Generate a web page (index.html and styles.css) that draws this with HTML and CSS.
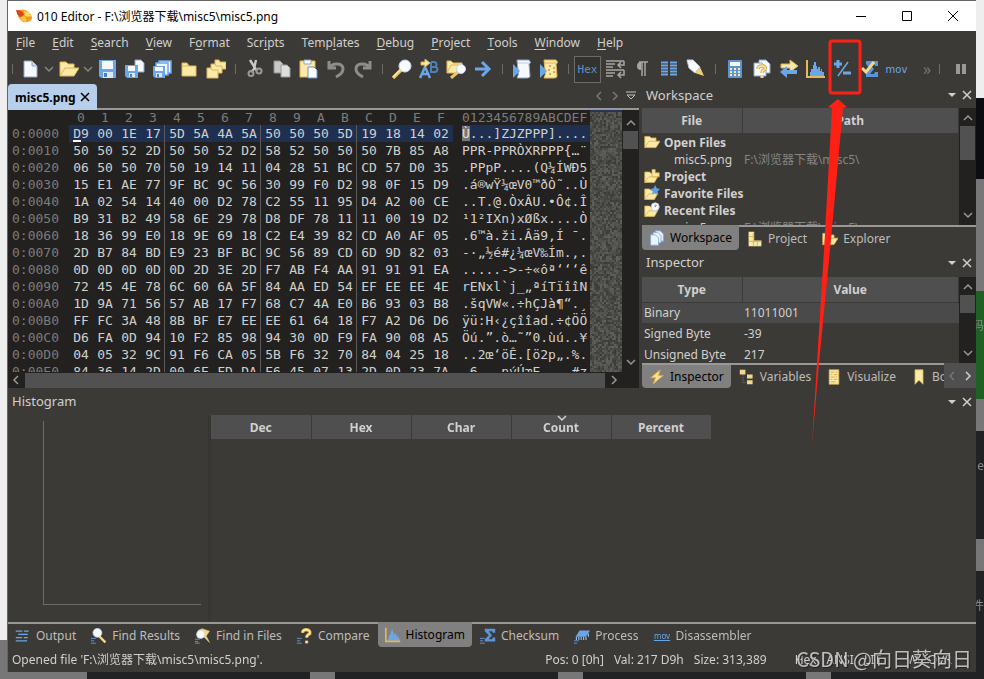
FILE: index.html
```html
<!DOCTYPE html>
<html lang="en">
  <head>
    <meta charset="UTF-8" />
    <meta name="viewport" content="width=device-width, initial-scale=1.0" />
    <title>010 Editor</title>
    <link rel="stylesheet" href="styles.css">
  </head>
  <body>
    <svg class="sprite" aria-hidden="true">
      <symbol id="new" viewBox="0 0 20 20"><path d="M4 2h8l5 5v11H4z" fill="#f7faff" stroke="#8ea6c8"/><path d="M12 2v5h5" fill="#c9d8ee" stroke="#8ea6c8"/></symbol>
      <symbol id="open" viewBox="0 0 20 20"><path d="M1 17V3h6l2 2h6v4" fill="#fbe9a6" stroke="#dcb65b"/><path d="M1 17L6 9h14l-5 8z" fill="#fbe9a6" stroke="#dcb65b"/></symbol>
      <symbol id="save" viewBox="0 0 20 20"><path d="M1 1h17v18H3l-2-2z" fill="#6ba6e8"/><path d="M4 2h11v8H4z" fill="#f5f8fd"/><path d="M5 13h10v6H5z" fill="#dce8f8"/><path d="M6 14h3v4H6z" fill="#4c80bd"/></symbol>
      <symbol id="save2" viewBox="0 0 20 20"><path d="M10 1h6l3 3v9h-9z" fill="#f7faff" stroke="#8ea6c8"/><path d="M0 6h13v13H2l-2-2z" fill="#6ba6e8"/><path d="M3 7h7v5H3z" fill="#f5f8fd"/><path d="M4 14h6v4H4z" fill="#dce8f8"/><path d="M5 15h2v3H5z" fill="#4c80bd"/></symbol>
      <symbol id="save3" viewBox="0 0 20 20"><path d="M7 2h12v12H7z" fill="#f5f8fd" stroke="#6ba6e8" stroke-width="1.500"/><path d="M4 4h12v12H4z" fill="#f5f8fd" stroke="#6ba6e8" stroke-width="1.500"/><path d="M1 7h12v12H3l-2-2z" fill="#6ba6e8"/><path d="M3 8h8v4H3z" fill="#f5f8fd"/><path d="M4 14h6v4H4z" fill="#dce8f8"/><path d="M5 15h2v3H5z" fill="#4c80bd"/></symbol>
      <symbol id="folder" viewBox="0 0 20 20"><path d="M3 17V4h5l2 3h7v10z" fill="#fbe9a6" stroke="#dcb65b"/><path d="M3 7h7" stroke="#dcb65b"/></symbol>
      <symbol id="folders" viewBox="0 0 20 20"><g fill="#fbe9a6" stroke="#dcb65b"><path d="M9 10V1h4l1 2h6v7z"/><path d="M5 14V5h4l1 2h6v7z"/><path d="M1 19V9h4l1 2h6v8z"/></g></symbol>
      <symbol id="cut" viewBox="0 0 20 20"><path d="M5 1l7 11M11 1l-2 9-3 3" stroke="#c9c9c9" stroke-width="2.4" fill="none"/><circle cx="6" cy="14.500" r="2.500" fill="none" stroke="#999" stroke-width="2"/><circle cx="14" cy="12" r="2.500" fill="none" stroke="#999" stroke-width="2"/></symbol>
      <symbol id="copy" viewBox="0 0 20 20"><path d="M2 2h6l3 3v9H2z" fill="#c8c8c6" stroke="#8f8f8d"/><path d="M9 6h6l3 3v9H9z" fill="#dededc" stroke="#999"/></symbol>
      <symbol id="paste" viewBox="0 0 20 20"><path d="M1 2h15v16H1z" fill="#fbe9a6" stroke="#dcb65b"/><path d="M5 1h7v4H5z" fill="#f7faff" stroke="#8ea6c8"/><path d="M9 8h6l3 3v8H9z" fill="#f7faff" stroke="#6c91c8"/></symbol>
      <symbol id="undo" viewBox="0 0 20 20"><path d="M3 2v7h7M3 9c4-6 14-5 14 1 0 4-3 6-7 8" fill="none" stroke="#8d8d8b" stroke-width="3"/></symbol>
      <symbol id="redo" viewBox="0 0 20 20"><path d="M17 2v7h-7M17 9C13 3 3 4 3 10c0 4 3 6 7 8" fill="none" stroke="#8d8d8b" stroke-width="3"/></symbol>
      <symbol id="find" viewBox="0 0 20 20"><path d="M1 19l8-8" stroke="#e7c66e" stroke-width="3.500"/><path d="M1 18l8-8" stroke="#fbe9a6" stroke-width="1.500"/><circle cx="13" cy="7" r="6" fill="#f7faff" stroke="#c9d7eb"/></symbol>
      <symbol id="replace" viewBox="0 0 20 20"><path d="M1 19L6 8l5 11M3 15h6" fill="none" stroke="#6ba6e8" stroke-width="2.500"/><path d="M12 3v10h4a2.500 2.500 0 0 0 0-5h-4m0-5h3a2.500 2.500 0 0 1 0 5" fill="none" stroke="#4c80bd" stroke-width="2"/><path d="M2 3h4V0l5 4-5 4V6H2z" fill="#fbe9a6" stroke="#dcb65b"/></symbol>
      <symbol id="findfiles" viewBox="0 0 20 20"><path d="M1 14V2h4l2 2h9v4M1 14L5 6h10l-5 8z" fill="#fbe9a6" stroke="#dcb65b"/><path d="M5 19l7-6" stroke="#e7c66e" stroke-width="3"/><circle cx="15" cy="10" r="4.500" fill="#f7faff" stroke="#c9d7eb"/></symbol>
      <symbol id="goto" viewBox="0 0 20 20"><path d="M2 10h14M9 3l7 7-7 7" fill="none" stroke="#6ba6e8" stroke-width="3"/></symbol>
      <symbol id="script" viewBox="0 0 20 20"><path d="M5 1h12q3 3 0 4l1 12q0 2-3 2H5q2-3 1-8z" fill="#f5f8fd" stroke="#8ea6c8"/><path d="M6 4h11" stroke="#bccbe1"/><path d="M1 5l7 7-7 7z" fill="#6ba6e8"/></symbol>
      <symbol id="template" viewBox="0 0 20 20"><path d="M5 1h12q3 3 0 4l1 12q0 2-3 2H5q2-3 1-8z" fill="#fbe9a6" stroke="#dcb65b"/><path d="M6 4h11" stroke="#dcb65b"/><path d="M10 7h2m2 2h2M9 11h2m3 2h2M10 15h2" stroke="#c99b3e" stroke-width="1.500"/><path d="M1 5l7 7-7 7z" fill="#6ba6e8"/></symbol>
      <symbol id="wrap" viewBox="0 0 20 20"><path d="M1 2h18M1 5h9M1 8h7M1 11h18M1 14h9M1 17h7M19 2v4h-6m3-3l-3 3 3 3M19 11v5h-6m3-3l-3 3 3 3" fill="none" stroke="#a6a6a4" stroke-width="1.500"/></symbol>
      <symbol id="para" viewBox="0 0 20 20"><path d="M9 3a4 4 0 0 0 0 8z" fill="#a6a6a4"/><path d="M7 3h9M10 3v14M13 3v14" stroke="#a6a6a4" stroke-width="1.500"/></symbol>
      <symbol id="cols" viewBox="0 0 20 20"><path d="M2 3.500h7m2 0h7M2 6.500h7m2 0h7M2 9.500h7m2 0h7M2 12.500h7m2 0h7M2 15.500h7m2 0h7" stroke="#6ba6e8" stroke-width="2"/></symbol>
      <symbol id="marker" viewBox="0 0 20 20"><path d="M1 1h6l7 7-5 6-6-5z" fill="#f7faff" stroke="#c4cede"/><path d="M14 8l4 9-9-3z" fill="#f0ce76"/></symbol>
      <symbol id="calc" viewBox="0 0 20 20"><rect x="3" y="1" width="14" height="18" rx="1" fill="#5b95d8"/><path d="M5 3h10v4H5z" fill="#f5f8fd"/><path d="M5 10h10M5 13h10M5 16h10" stroke="#fbe9a6" stroke-width="2" stroke-dasharray="2"/></symbol>
      <symbol id="ask" viewBox="0 0 20 20"><path d="M7 1h7l4 4v9H7z" fill="#f7faff" stroke="#8ea6c8"/><path d="M2 4h8l4 4v9H2z" fill="#f7faff" stroke="#8ea6c8"/><path d="M6 10q0-3 4-3 4 0 3 3-3 2-3 4m0 3v2" fill="none" stroke="#ddb04e" stroke-width="3.500"/><path d="M6 10q0-3 4-3 4 0 3 3-3 2-3 4m0 3v2" fill="none" stroke="#fbe9a6" stroke-width="1.500"/></symbol>
      <symbol id="compare" viewBox="0 0 20 20"><path d="M2 5h9V1l8 6-8 6V9H2z" fill="#fbe9a6" stroke="#dcb65b"/><path d="M18 11H8V7l-7 6 7 6v-4h10z" fill="#6ba6e8"/></symbol>
      <symbol id="chart" viewBox="0 0 20 20"><path d="M4 17v-4h1v-3h2V6h1V3h2v4h1v3h1V8h2v4h1v-2h1v3h2v4z" fill="#6ba6e8"/><path d="M1 1v17h18" fill="none" stroke="#e5b95a" stroke-width="2"/></symbol>
      <symbol id="plusminus" viewBox="0 0 20 20"><path d="M1 5h8M5 1v8M10 14h8" stroke="#6ba6e8" stroke-width="3"/><path d="M15 3L5 17" stroke="#6ba6e8" stroke-width="1.500"/></symbol>
      <symbol id="sumcheck" viewBox="0 0 20 20"><path d="M6 2h12v5h-3l-1-2h-4l4 5-4 5h4l1-2h3v5H6v-3l4-5-4-5z" fill="#5b95d8"/><path d="M2 9l4 4 8-10" fill="none" stroke="#f3d98d" stroke-width="3"/></symbol>
      <symbol id="tree" viewBox="0 0 20 20"><path d="M1 1h7v6H1zM10 7h7v5h-7zM10 14h7v5h-7z" fill="#f3d98d"/><path d="M5 8v9h5" fill="none" stroke="#888" stroke-dasharray="1 1"/></symbol>
      <symbol id="blocks" viewBox="0 0 20 20"><path d="M2 1h7v11h9v7H2z" fill="#fbe9a6"/><path d="M2 7h7M2 13h16M8 2v17M13 12v7" stroke="#d8a942"/></symbol>
      <symbol id="docs" viewBox="0 0 20 20"><g fill="#edf4ff" stroke="#7ea6da"><path d="M8 1h6l4 4v9H8z"/><path d="M5 3h6l4 4v9H5z"/><path d="M2 6h6l4 4v9H2z"/></g></symbol>
      <symbol id="bolt" viewBox="0 0 20 20"><path d="M14 1L2 11h6l-3 8L18 8h-6z" fill="#fbe08a" stroke="#d6a23a"/></symbol>
      <symbol id="note" viewBox="0 0 20 20"><path d="M4 1h12v18H4z" fill="#fbe9a6" stroke="#dcb65b"/><path d="M6 4h4m2 0h2M6 7h2m2 0h4M6 10h5m1 0h2M6 13h2m2 0h4M6 16h6" stroke="#c99b3e"/></symbol>
      <symbol id="mark" viewBox="0 0 20 20"><path d="M5 1h10v18l-5-5-5 5z" fill="#fbe9a6" stroke="#dcb65b"/></symbol>
      <symbol id="star" viewBox="0 0 20 20"><path d="M1 18V5h6l2 2h5v4M1 18l5-7h11l-4 7z" fill="#fbe9a6" stroke="#dcb65b"/><path d="M14 0l2 4 4 1-3 3 1 4-4-2-4 2 1-4-3-3 4-1z" fill="#5f9fe6"/></symbol>
      <symbol id="recent" viewBox="0 0 20 20"><path d="M1 18V5h6l2 2h5v4M1 18l5-7h11l-4 7z" fill="#fbe9a6" stroke="#dcb65b"/><circle cx="14" cy="6" r="5" fill="#fff" stroke="#b9cbe3"/><path d="M14 3v3l2-2" fill="none" stroke="#5c6f8c"/></symbol>
      <symbol id="projfolder" viewBox="0 0 20 20"><path d="M1 18V5h6l2 2h5v4M1 18l5-7h11l-4 7z" fill="#fbe9a6" stroke="#dcb65b"/><path d="M10 2h4v4h5v5h-9z" fill="#fbe9a6" stroke="#d8a942"/></symbol>
      <symbol id="lines" viewBox="0 0 20 20"><path d="M1 4h8m2 0h6M4 8h12M1 12h8m2 0h5M1 16h14" stroke="#6ba6e8" stroke-width="1.500"/></symbol>
      <symbol id="results" viewBox="0 0 20 20"><path d="M10 10l8 8" stroke="#f3d98d" stroke-width="3"/><circle cx="8" cy="6" r="5.500" fill="#f7faff" stroke="#c9d7eb"/><path d="M0 13h6M0 16h4M0 19h6" stroke="#6ba6e8"/></symbol>
      <symbol id="infiles" viewBox="0 0 20 20"><path d="M4 3l5-2 9 3-4 6 4 8-5-5z" fill="#f3d98d" stroke="#dcb65b"/><circle cx="7" cy="8" r="5" fill="#f7faff" stroke="#c9d7eb"/><path d="M0 14h6M0 17h4M0 19h6" stroke="#6ba6e8"/></symbol>
      <symbol id="question" viewBox="0 0 20 20"><path d="M7 6q0-4 5-4 5 1 4 5-4 2-4 5m0 4v3" fill="none" stroke="#e1b652" stroke-width="4"/><path d="M7 6q0-4 5-4 5 1 4 5-4 2-4 5m0 4v3" fill="none" stroke="#fbe9a6" stroke-width="2"/><path d="M0 13h6M0 16h4M0 19h6" stroke="#6ba6e8"/></symbol>
      <symbol id="sum" viewBox="0 0 20 20"><path d="M6 1h13v5h-3l-1-2h-4l4 5-4 5h4l1-2h3v5H6v-3l5-5-5-5z" fill="#5b95d8"/><path d="M0 13h6M0 16h4M0 19h6" stroke="#6ba6e8"/></symbol>
      <symbol id="chip" viewBox="0 0 20 20"><path d="M7 3h13l-5 8H2z" fill="#6ba6e8"/><path d="M3 11v4m3-4v4m3-4v4m3-4v4m3-4v4m3-8v4" stroke="#8fb9e8" stroke-width="1.500"/><path d="M0 16h6M0 19h4" stroke="#6ba6e8"/></symbol>
      <symbol id="left" viewBox="0 0 12 12"><path d="M8 2L4 6l4 4" fill="none" stroke="currentColor" stroke-width="1.500"/></symbol>
      <symbol id="right" viewBox="0 0 12 12"><path d="M4 2l4 4-4 4" fill="none" stroke="currentColor" stroke-width="1.500"/></symbol>
      <symbol id="up" viewBox="0 0 12 12"><path d="M2 8l4-4 4 4" fill="none" stroke="currentColor" stroke-width="1.500"/></symbol>
      <symbol id="down" viewBox="0 0 12 12"><path d="M2 4l4 4 4-4" fill="none" stroke="currentColor" stroke-width="1.500"/></symbol>
      <symbol id="list" viewBox="0 0 12 12"><path d="M1 2h10M2 5l4 4 4-4z" fill="none" stroke="currentColor"/></symbol>
      <symbol id="caret" viewBox="0 0 12 12"><path d="M2 4h8L6 8z" fill="currentColor"/></symbol>
      <symbol id="close" viewBox="0 0 12 12"><path d="M2 2l8 8M10 2l-8 8" fill="none" stroke="currentColor" stroke-width="1.500"/></symbol>
    </svg>

    <div class="desktop">
      <div class="window">
        <header class="titlebar">
          <svg class="logo" viewBox="0 0 16 14"><path d="M1 2q6-3 10 0 5 3 5 8-3 4-9 3Q1 9 1 2z" fill="#f39a25"/><path d="M0 1q7 0 8 5L4 8Q1 6 0 1z" fill="#d9431e"/><path d="M8 2q6 1 7 5-3 1-6 0z" fill="#ffd95c"/><path d="M4 9l4-2q3 3 2 6-4 0-6-4z" fill="#ffc83a"/></svg>
          <span class="caption">010 Editor - F:\浏览器下载\misc5\misc5.png</span>
          <button aria-label="Minimize"><svg viewBox="0 0 12 12"><path d="M1 6.500h10" stroke="#000"/></svg></button>
          <button aria-label="Maximize"><svg viewBox="0 0 12 12"><path d="M1.500 1.500h9v9h-9z" fill="none" stroke="#000"/></svg></button>
          <button aria-label="Close"><svg viewBox="0 0 12 12"><path d="M1 1l10 10M11 1L1 11" stroke="#000"/></svg></button>
        </header>

        <nav class="menu">
          <button><u>F</u>ile</button>
          <button><u>E</u>dit</button>
          <button><u>S</u>earch</button>
          <button><u>V</u>iew</button>
          <button>F<u>o</u>rmat</button>
          <button>Scr<u>i</u>pts</button>
          <button>Temp<u>l</u>ates</button>
          <button><u>D</u>ebug</button>
          <button><u>P</u>roject</button>
          <button><u>T</u>ools</button>
          <button><u>W</u>indow</button>
          <button><u>H</u>elp</button>
        </nav>

        <div class="toolbar">
          <i class="sep first"></i>
          <button aria-label="New"><svg><use href="#new"/></svg></button>
          <button class="drop" aria-label="New options"><svg><use href="#down"/></svg></button>
          <button aria-label="Open"><svg><use href="#open"/></svg></button>
          <button class="drop" aria-label="Open options"><svg><use href="#down"/></svg></button>
          <button aria-label="Save"><svg><use href="#save"/></svg></button>
          <button aria-label="Save as"><svg><use href="#save2"/></svg></button>
          <button aria-label="Save all"><svg><use href="#save3"/></svg></button>
          <button aria-label="Close file"><svg><use href="#folder"/></svg></button>
          <button aria-label="Close all"><svg><use href="#folders"/></svg></button>
          <i class="sep"></i>
          <button aria-label="Cut"><svg><use href="#cut"/></svg></button>
          <button aria-label="Copy"><svg><use href="#copy"/></svg></button>
          <button aria-label="Paste"><svg><use href="#paste"/></svg></button>
          <button aria-label="Undo"><svg><use href="#undo"/></svg></button>
          <button aria-label="Redo"><svg><use href="#redo"/></svg></button>
          <i class="sep"></i>
          <button aria-label="Find"><svg><use href="#find"/></svg></button>
          <button aria-label="Replace"><svg><use href="#replace"/></svg></button>
          <button aria-label="Find in files"><svg><use href="#findfiles"/></svg></button>
          <button aria-label="Goto"><svg><use href="#goto"/></svg></button>
          <i class="sep"></i>
          <button aria-label="Run script"><svg><use href="#script"/></svg></button>
          <button aria-label="Run template"><svg><use href="#template"/></svg></button>
          <i class="sep"></i>
          <button class="hexmode">Hex</button>
          <button aria-label="Word wrap"><svg><use href="#wrap"/></svg></button>
          <button aria-label="Show whitespace"><svg><use href="#para"/></svg></button>
          <button aria-label="Columns"><svg><use href="#cols"/></svg></button>
          <button aria-label="Highlight"><svg><use href="#marker"/></svg></button>
          <i class="sep"></i>
          <button aria-label="Calculator"><svg><use href="#calc"/></svg></button>
          <button aria-label="File info"><svg><use href="#ask"/></svg></button>
          <button aria-label="Compare files"><svg><use href="#compare"/></svg></button>
          <button aria-label="Histogram"><svg><use href="#chart"/></svg></button>
          <button aria-label="Operations"><svg><use href="#plusminus"/></svg></button>
          <button aria-label="Checksum"><svg><use href="#sumcheck"/></svg></button>
          <button class="mov">mov</button>
          <button class="more" aria-label="More tools">»</button>
          <i class="sep"></i>
          <button class="pause" aria-label="Pause"><svg viewBox="0 0 20 20"><path d="M5 5h4v10H5zM11 5h4v10h-4z" fill="#999"/></svg></button>
        </div>

        <div class="work">
          <section class="editor">
            <div class="filetabs">
              <button class="filetab">misc5.png <svg><use href="#close"/></svg></button>
              <div class="tabnav">
                <button aria-label="Previous"><svg><use href="#left"/></svg></button>
                <button aria-label="Next"><svg><use href="#right"/></svg></button>
                <button class="lit" aria-label="File list"><svg><use href="#list"/></svg></button>
              </div>
            </div>
            <div class="hexarea">
              <div class="hexclip">
                <table class="hex">
                  <thead><tr id="ruler"></tr></thead>
                  <tbody id="bytes"></tbody>
                </table>
              </div>
              <canvas id="minimap" class="minimap" width="16" height="131"></canvas>
              <div class="vscroll">
                <svg><use href="#up"/></svg><i class="thumb"></i><svg class="end"><use href="#down"/></svg>
              </div>
            </div>
            <div class="hscroll">
              <svg><use href="#left"/></svg><i class="thumb"></i><svg><use href="#right"/></svg>
            </div>
          </section>

          <aside class="side">
            <div class="paneltitle"><h2>Workspace</h2><button aria-label="Workspace menu"><svg><use href="#caret"/></svg></button><button aria-label="Close workspace"><svg><use href="#close"/></svg></button></div>
            <div class="panelbody workspace">
              <div class="clip">
                <table class="grid">
                  <thead><tr><th class="key">File</th><th>Path</th></tr></thead>
                  <tbody>
                    <tr><td class="node" colspan="2"><svg><use href="#open"/></svg>Open Files</td></tr>
                    <tr><td class="leaf">misc5.png</td><td class="path">F:\浏览器下载\misc5\</td></tr>
                    <tr><td class="node" colspan="2"><svg><use href="#projfolder"/></svg>Project</td></tr>
                    <tr><td class="node" colspan="2"><svg><use href="#star"/></svg>Favorite Files</td></tr>
                    <tr><td class="node" colspan="2"><svg><use href="#recent"/></svg>Recent Files</td></tr>
                    <tr><td class="leaf">misc5.png</td><td class="path">F:\浏览器下载\misc5\</td></tr>
                  </tbody>
                </table>
              </div>
              <div class="vscroll long"><svg><use href="#up"/></svg><i class="thumb"></i><svg class="end"><use href="#down"/></svg></div>
            </div>
            <div class="tabs">
              <button class="active"><svg><use href="#docs"/></svg>Workspace</button>
              <button><svg><use href="#blocks"/></svg>Project</button>
              <button><svg><use href="#open"/></svg>Explorer</button>
            </div>

            <div class="paneltitle inspectortitle"><h2>Inspector</h2><button aria-label="Inspector menu"><svg><use href="#caret"/></svg></button><button aria-label="Close inspector"><svg><use href="#close"/></svg></button></div>
            <div class="panelbody inspector">
              <div class="clip">
                <table class="grid">
                  <thead><tr><th class="key">Type</th><th>Value</th></tr></thead>
                  <tbody>
                    <tr class="picked"><td>Binary</td><td>11011001</td></tr>
                    <tr><td>Signed Byte</td><td>-39</td></tr>
                    <tr><td>Unsigned Byte</td><td>217</td></tr>
                  </tbody>
                </table>
              </div>
              <div class="vscroll"><svg><use href="#up"/></svg><i class="thumb"></i><svg class="end"><use href="#down"/></svg></div>
            </div>
            <div class="tabrow">
              <div class="tabs">
                <button class="active"><svg><use href="#bolt"/></svg>Inspector</button>
                <button><svg><use href="#tree"/></svg>Variables</button>
                <button><svg><use href="#note"/></svg>Visualize</button>
                <button><svg><use href="#mark"/></svg>Bookmarks</button>
              </div>
              <div class="pager">
                <button class="off" aria-label="Scroll left"><svg><use href="#left"/></svg></button>
                <button aria-label="Scroll right"><svg><use href="#right"/></svg></button>
              </div>
            </div>
          </aside>
        </div>

        <section class="histogram">
          <div class="paneltitle"><h2>Histogram</h2><button aria-label="Histogram menu"><svg><use href="#caret"/></svg></button><button aria-label="Close histogram"><svg><use href="#close"/></svg></button></div>
          <div class="histbody">
            <div class="plot"><div class="axes"></div></div>
            <div class="counts">
              <table>
                <thead><tr><th>Dec</th><th>Hex</th><th>Char</th><th class="sorted">Count<svg><use href="#down"/></svg></th><th>Percent</th></tr></thead>
              </table>
            </div>
          </div>
        </section>

        <div class="tabs bottom">
          <button><svg><use href="#lines"/></svg>Output</button>
          <button><svg><use href="#results"/></svg>Find Results</button>
          <button><svg><use href="#infiles"/></svg>Find in Files</button>
          <button><svg><use href="#question"/></svg>Compare</button>
          <button class="active"><svg><use href="#chart"/></svg>Histogram</button>
          <button><svg><use href="#sum"/></svg>Checksum</button>
          <button><svg><use href="#chip"/></svg>Process</button>
          <button><span class="movicon">mov</span>Disassembler</button>
        </div>

        <footer class="status">
          <span class="message">Opened file 'F:\浏览器下载\misc5\misc5.png'.</span>
          <span>Pos: 0 [0h]</span>
          <span>Val: 217 D9h</span>
          <span class="size">Size: 313,389</span>
          <span>Hex</span>
          <span>ANSI</span>
          <span>LIT</span>
          <span class="write">W</span>
          <span>OVR</span>
        </footer>
      </div>
      <div class="behind">
        <div class="black"></div>
        <div class="green">码</div>
        <div class="dark">e</div>
        <div class="dark">件</div>
      </div>
      <div class="under"></div>

      <svg class="arrow" width="60" height="420" viewBox="0 0 60 420">
        <rect x="24" y="4" width="30" height="52" rx="2" fill="none" stroke="#ff2015" stroke-width="3"/>
        <path d="M32 62l9 8-4 1L24 213 13 326 6 408l5-82 7-113 8-142-4-1z" fill="#ff2015"/>
      </svg>
      <div class="watermark">CSDN @向日葵向日</div>
    </div>

    <script>
      const rows = [
        "D9 00 1E 17 5D 5A 4A 5A 50 50 50 5D 19 18 14 02",
        "50 50 52 2D 50 50 52 D2 58 52 50 50 50 7B 85 A8",
        "06 50 50 70 50 19 14 11 04 28 51 BC CD 57 D0 35",
        "15 E1 AE 77 9F BC 9C 56 30 99 F0 D2 98 0F 15 D9",
        "1A 02 54 14 40 00 D2 78 C2 55 11 95 D4 A2 00 CE",
        "B9 31 B2 49 58 6E 29 78 D8 DF 78 11 11 00 19 D2",
        "18 36 99 E0 18 9E 69 18 C2 E4 39 82 CD A0 AF 05",
        "2D B7 84 BD E9 23 BF BC 9C 56 89 CD 6D 9D 82 03",
        "0D 0D 0D 0D 0D 2D 3E 2D F7 AB F4 AA 91 91 91 EA",
        "72 45 4E 78 6C 60 6A 5F 84 AA ED 54 EF EE EE 4E",
        "1D 9A 71 56 57 AB 17 F7 68 C7 4A E0 B6 93 03 B8",
        "FF FC 3A 48 8B BF E7 EE EE 61 64 18 F7 A2 D6 D6",
        "D6 FA 0D 94 10 F2 85 98 94 30 0D F9 FA 90 08 A5",
        "04 05 32 9C 91 F6 CA 05 5B F6 32 70 84 04 25 18",
        "84 36 14 2D 00 6E FD DA E6 45 07 13 2D 0D 23 7A"
      ]
      const digits = "0123456789ABCDEF"
      const decoder = new TextDecoder("windows-1252")

      function addCell(row, tag, text, name) {
        const cell = document.createElement(tag)
        cell.textContent = text
        if (name) cell.className = name
        row.appendChild(cell)
        return cell
      }

      // control bytes are shown as dots
      function toText(bytes) {
        const raw = decoder.decode(new Uint8Array(bytes.map(b => parseInt(b, 16))))
        return raw.replace(/[\x00-\x1f\x7f-\x9f]/g, ".")
      }

      const ruler = document.getElementById("ruler")
      addCell(ruler, "th", "", "offset")
      for (const d of digits) addCell(ruler, "th", d)
      addCell(ruler, "th", digits, "ascii")

      const body = document.getElementById("bytes")
      rows.forEach((line, i) => {
        const row = document.createElement("tr")
        const bytes = line.split(" ")
        const text = toText(bytes)
        addCell(row, "th", "0:00" + digits[i] + "0", "offset")
        bytes.forEach(b => addCell(row, "td", b))
        const ascii = addCell(row, "td", "", "ascii")
        if (i === 0) {
          row.className = "current"
          addCell(ascii, "mark", text[0])
          ascii.append(text.slice(1))
        } else {
          ascii.textContent = text
        }
        body.appendChild(row)
      })

      const ctx = document.getElementById("minimap").getContext("2d")
      let seed = 217
      for (let y = 0; y < 131; y++) {
        for (let x = 0; x < 16; x++) {
          seed = (seed * 1103515245 + 12345) % 2147483648
          const v = 58 + Math.floor((seed / 2147483648) * 38)
          ctx.fillStyle = y === 0 ? "#26345c" : `rgb(${v},${v},${v - 3})`
          ctx.fillRect(x, y, 1, 1)
        }
      }
    </script>
  </body>
</html>
```
FILE: styles.css
```css
* {
  box-sizing: border-box;
}

body {
  margin: 0;
  background-color: #777777;
  font-family: "Noto Sans", "Noto Sans CJK SC", sans-serif;
  font-size: 12px;
  line-height: 17px;
  color: #d0d0ce;
}

button {
  margin: 0;
  padding: 0;
  border: none;
  background: none;
  font: inherit;
  color: inherit;
  display: flex;
  align-items: center;
  justify-content: center;
  flex-shrink: 0;
}

svg {
  display: block;
  flex-shrink: 0;
  width: 12px;
  height: 12px;
}

table {
  border-collapse: collapse;
  table-layout: fixed;
}

.sprite {
  position: absolute;
  width: 0;
  height: 0;
}

.desktop {
  position: relative;
  display: grid;
  grid-template-columns: minmax(0, 1fr) 8px;
  grid-template-rows: 1fr 7px;
  min-height: 100vh;
  padding-left: 7px;
  background: linear-gradient(#eeeeee 640px, #777777 640px);
  overflow: hidden;
}

.window {
  display: flex;
  flex-direction: column;
  min-width: 0;
  background-color: #3c3a36;
  border-top: 1px solid #666666;
  border-left: 1px solid #666666;
}

.behind {
  display: flex;
  flex-direction: column;
  gap: 32px;
  padding-top: 98px;
  background: linear-gradient(#eeeeee 98px, #777777 98px);
  color: #888888;
  overflow: hidden;
}

.behind div {
  height: 108px;
  flex-shrink: 0;
  display: flex;
  justify-content: flex-end;
  padding-top: 26px;
}

.behind .black {
  height: 81px;
  margin-bottom: 80px;
  background-color: #0c0d10;
}

.behind .green {
  background-color: #1f6023;
}

.behind .dark {
  background-color: #202224;
}

.behind .dark:last-child {
  flex: 1;
  height: auto;
}

.under {
  grid-column: 1 / span 2;
  background: repeating-linear-gradient(90deg, #202224 0 223px, #777777 223px 248px) 80px 0 no-repeat #777777;
}

/* title and menu */
.titlebar {
  display: flex;
  align-items: center;
  height: 30px;
  padding-left: 8px;
  background-color: #ffffff;
  color: #000000;
}

.logo {
  width: 16px;
  height: 14px;
  margin-right: 5px;
}

.caption {
  flex: 1;
}

.titlebar button {
  width: 46px;
  height: 30px;
}

.menu {
  display: flex;
  gap: 1px;
  height: 23px;
}

.menu button {
  padding: 0 8px;
}

.menu u {
  text-underline-offset: 2px;
}

/* toolbar */
.toolbar {
  display: flex;
  align-items: center;
  height: 30px;
}

.toolbar button {
  width: 27px;
  height: 27px;
}

.toolbar svg {
  width: 20px;
  height: 20px;
}

.toolbar .drop {
  width: 12px;
  color: #858583;
}

.toolbar .drop svg {
  width: 12px;
  height: 12px;
}

.sep {
  width: 12px;
  height: 10px;
  flex-shrink: 0;
  background: linear-gradient(#6c6b68, #6c6b68) center / 1px 10px no-repeat;
}

.sep.first {
  width: 8px;
}

.toolbar .hexmode {
  border: 1px solid #6c6b68;
  background-color: #32332f;
  color: #5d92cc;
  font-family: "DejaVu Sans Mono", monospace;
  font-size: 11px;
}

.toolbar .mov {
  color: #6ba6e8;
  font-family: "DejaVu Sans", sans-serif;
  font-size: 10px;
}

.toolbar .more {
  margin-left: auto;
  width: 12px;
  color: #777775;
  font-size: 16px;
}

.toolbar .pause {
  margin: 0 2px;
}

/* hex editor */
.work {
  display: flex;
  height: 304px;
}

.editor {
  flex: 1;
  min-width: 0;
  display: flex;
  flex-direction: column;
  background-color: #232120;
}

.filetabs {
  display: flex;
  justify-content: space-between;
  height: 26px;
  border-bottom: 2px solid #989898;
  background-color: #3c3a36;
}

.filetab {
  height: 26px;
  padding: 0 6px 0 7px;
  gap: 3px;
  border-radius: 4px 4px 0 0;
  background-color: #b8cfeb;
  color: #000000;
  font-weight: bold;
}

.tabnav {
  display: flex;
  color: #777775;
}

.tabnav button {
  width: 16px;
}

.tabnav .lit {
  color: #c0c0be;
}

.hexarea {
  flex: 1;
  min-height: 0;
  display: flex;
}

.hexclip {
  flex: 1;
  min-width: 0;
  overflow: hidden;
}

.hex {
  width: 582px;
  font-family: "DejaVu Sans Mono", monospace;
  font-size: 13px;
  line-height: 17px;
}

.hex th,
.hex td {
  width: 24px;
  height: 17px;
  padding: 0;
  text-align: center;
  white-space: pre;
}

.hex th {
  font-weight: normal;
  color: #7c7c7a;
}

.hex thead th {
  height: 15px;
  line-height: 15px;
}

.hex tbody td:nth-child(5),
.hex tbody td:nth-child(9),
.hex tbody td:nth-child(13) {
  background-image: linear-gradient(#5c5b59, #5c5b59);
  background-position: right;
  background-size: 1px 100%;
  background-repeat: no-repeat;
}

.hex .offset {
  width: 61px;
  padding-left: 4px;
  text-align: left;
}

.hex .ascii {
  width: 137px;
  padding-left: 9px;
  text-align: left;
}

.hex .current td {
  background-color: #1f2f50;
}

.hex .current .ascii {
  background: linear-gradient(#1f2f50, #1f2f50) 9px 0 no-repeat;
}

.hex .current td:nth-child(2) {
  background: linear-gradient(#ffffff, #ffffff) 4px 100% / 8px 2px no-repeat #1f2f50;
}

.hex mark {
  background-color: #777777;
  color: #e0e0e0;
}

.minimap {
  width: 32px;
  height: 262px;
  image-rendering: pixelated;
}

.vscroll {
  width: 17px;
  flex-shrink: 0;
  display: flex;
  flex-direction: column;
  align-items: center;
  padding: 4px 1px;
  background-color: #232120;
  color: #989896;
}

.vscroll .thumb {
  width: 15px;
  height: 18px;
  margin-top: 2px;
  background-color: #515151;
}

.vscroll.long .thumb {
  height: 34px;
}

.vscroll .end {
  margin-top: auto;
}

.hexarea .vscroll {
  padding-top: 7px;
}

.hscroll {
  display: flex;
  align-items: center;
  height: 16px;
  padding: 0 19px 0 2px;
  gap: 3px;
  color: #989896;
}

.hscroll .thumb {
  flex: 1;
  height: 15px;
  background-color: #515151;
}

/* docked panels */
.side {
  width: 337px;
  padding-left: 3px;
  overflow: hidden;
}

.paneltitle {
  display: flex;
  align-items: center;
  height: 24px;
  padding: 0 2px 2px 4px;
}

.paneltitle h2 {
  flex: 1;
  margin: 0;
  font-size: 13px;
  font-weight: normal;
}

.paneltitle button {
  width: 15px;
  height: 16px;
}

.panelbody {
  display: flex;
}

.workspace {
  height: 117px;
}

.inspector {
  height: 86px;
}

.paneltitle.inspectortitle {
  height: 27px;
}

.clip {
  flex: 1;
  overflow: hidden;
}

.grid {
  width: 100%;
}

.grid th,
.counts th {
  height: 24px;
  padding: 0;
  background-color: #4f4f4f;
  border-right: 1px solid #3c3a36;
}

.grid th {
  height: 25px;
  border-bottom: 1px solid #3c3a36;
}

.grid .key {
  width: 100px;
}

.grid td {
  height: 17px;
  padding: 0 2px;
  white-space: nowrap;
}

.inspector td {
  height: 21px;
}

.picked {
  background-color: #4a4a4a;
}

.grid .node {
  font-weight: bold;
}

.node svg {
  display: inline-block;
  width: 16px;
  height: 16px;
  margin-right: 4px;
  vertical-align: top;
}

.grid .leaf {
  padding-left: 32px;
}

.grid .path {
  color: #858583;
}

.tabs {
  display: flex;
  gap: 1px;
  height: 25px;
  border-top: 2px solid #989898;
}

.tabs button {
  height: 23px;
  padding: 0 7px;
  gap: 5px;
  color: #bcbcba;
}

.tabs svg {
  width: 16px;
  height: 16px;
}

.tabs .active {
  height: 25px;
  margin-top: -2px;
  border-radius: 0 0 4px 4px;
  background-color: #808080;
  color: #000000;
}

.tabrow {
  display: flex;
}

.tabrow .tabs {
  flex: 1;
  min-width: 0;
  overflow: clip;
}

.tabrow .active {
  margin-top: 0;
  height: 23px;
}

.pager {
  display: flex;
  background-color: #4f4f4f;
}

.pager button {
  width: 16px;
}

.pager .off {
  color: #777775;
}

/* histogram */
.histogram {
  flex: 1;
  display: flex;
  flex-direction: column;
}

.histogram .paneltitle {
  height: 27px;
  padding-bottom: 0;
}

.histbody {
  flex: 1;
  display: flex;
}

.plot {
  width: 203px;
  display: flex;
  padding: 6px 7px 17px 35px;
  border-right: 3px solid #383632;
}

.axes {
  flex: 1;
  border-left: 1px solid #6c6b68;
  border-bottom: 1px solid #6c6b68;
}

.counts th {
  position: relative;
  width: 100px;
}

.counts table {
  width: 500px;
}

.sorted svg {
  position: absolute;
  top: -3px;
  left: 44px;
}

.movicon {
  width: 17px;
  color: #6ba6e8;
  font-size: 8px;
  text-decoration: underline;
}

/* status */
.status {
  display: flex;
  align-items: center;
  height: 25px;
  gap: 10px;
  padding: 0 24px 0 4px;
}

.message {
  flex: 1;
}

.status .size {
  margin-right: 18px;
}

.status .write {
  margin-left: 16px;
}

.arrow {
  position: absolute;
  top: 37px;
  right: 118px;
  width: 60px;
  height: 420px;
}

.watermark {
  position: absolute;
  right: 12px;
  bottom: 6px;
  font-family: "Noto Sans CJK SC", sans-serif;
  font-size: 20px;
  line-height: 28px;
  color: rgba(225, 225, 225, 0.8);
  text-shadow: 1px 1px 1px #222222;
}
```
